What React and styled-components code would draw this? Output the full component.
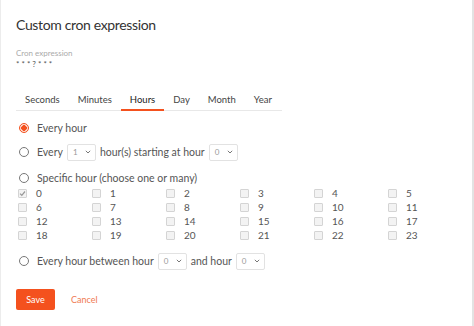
import React from 'react'
import styled, { createGlobalStyle } from 'styled-components'

const Global = createGlobalStyle`
  html, body { margin: 0; padding: 0; background: #fff; }
  body { font-family: "Lato", "Liberation Sans", sans-serif; color: #444; }
`

const Dialog = styled.div`
  box-sizing: border-box;
  width: 474px;
  height: 326px;
  border-left: 1px solid #ececec;
  border-right: 2px solid #e3e3e3;
  padding: 15px 16px 0 15px;
  display: flex;
  flex-direction: column;
`

const Title = styled.h2`
  margin: 0;
  font-size: 14px;
  letter-spacing: -0.35px;
  font-weight: 400;
  line-height: 20px;
  color: #333;
`

const Label = styled.div`
  margin-top: 13px;
  font-size: 8px;
  line-height: 10px;
  color: #aaa;
`

const Expr = styled.div`
  margin-top: 1px;
  font-size: 8px;
  line-height: 10px;
  color: #555;
`

const Tabs = styled.div`
  margin-top: 21px;
  display: flex;
  width: 266px;
  border-bottom: 1px solid #e8e8e8;
`

const Tab = styled.div`
  padding: 0 9px;
  height: 19px;
  line-height: 19px;
  font-size: 9.5px;
  color: ${p => (p.$active ? '#222' : '#444')};
  border-bottom: 2px solid ${p => (p.$active ? '#f4511e' : 'transparent')};
  margin-bottom: -1px;
`

const Options = styled.div`
  margin-top: 5px;
  display: flex;
  flex-direction: column;
`

const Row = styled.div`
  display: flex;
  align-items: center;
  gap: 4px;
  height: ${p => p.$h || 24}px;
  margin-top: ${p => p.$mt || 0}px;
  font-size: 10.5px;
  color: #555;
`

const Radio = styled.span`
  box-sizing: border-box;
  width: 10px;
  height: 10px;
  margin: 0 4px 0 3px;
  border-radius: 50%;
  border: 1px solid ${p => (p.$checked ? '#f4511e' : '#777')};
  background: ${p => (p.$checked ? 'radial-gradient(circle, #f4511e 0 2.6px, #fde0d6 3px)' : '#fff')};
  flex-shrink: 0;
`

const Select = styled.span`
  box-sizing: border-box;
  display: inline-flex;
  align-items: center;
  justify-content: space-between;
  width: 29px;
  height: 17px;
  padding: 0 4px 0 5px;
  border: 1px solid #e2e2e2;
  border-radius: 2px;
  font-size: 8px;
  color: #999;
`

const Grid = styled.div`
  display: grid;
  grid-template-columns: repeat(6, 74px);
  margin: 0 0 7px 2px;
`

const Cell = styled.label`
  display: flex;
  align-items: center;
  height: 14px;
  font-size: 10px;
  color: #555;
`

const Box = styled.span`
  box-sizing: border-box;
  width: 9px;
  height: 9px;
  margin-right: 9px;
  border: 1px solid #d4d4d4;
  border-radius: 1px;
  background: #f3f3f3;
  display: flex;
  align-items: center;
  justify-content: center;
`

const Actions = styled.div`
  margin-top: 16px;
  display: flex;
  align-items: center;
  gap: 16px;
`

const SaveButton = styled.button`
  width: 39px;
  height: 21px;
  border: none;
  border-radius: 2px;
  background: #f4511e;
  color: #fff;
  font-family: inherit;
  font-size: 9px;
  padding: 0;
`

const CancelButton = styled.button`
  border: none;
  background: none;
  color: #f07a52;
  font-family: inherit;
  font-size: 9px;
  padding: 0;
`

const Chevron = () => (
  <svg width="6" height="4" viewBox="0 0 6 4">
    <path d="M0.8 0.8 L3 3 L5.2 0.8" fill="none" stroke="#777" strokeWidth="1" />
  </svg>
)

const Dropdown = ({ value }) => (
  <Select>
    {value}
    <Chevron />
  </Select>
)

const Check = () => (
  <svg width="7" height="7" viewBox="0 0 7 7">
    <path d="M1 3.6 L2.8 5.3 L6 1.5" fill="none" stroke="#999" strokeWidth="1.2" />
  </svg>
)

const tabs = ['Seconds', 'Minutes', 'Hours', 'Day', 'Month', 'Year']
const hours = Array.from({ length: 24 }, (_, i) => i)

const App = () => {
  return (
    <Dialog>
      <Global />
      <Title>Custom cron expression</Title>
      <Label>Cron expression</Label>
      <Expr>* * * ? * * *</Expr>
      <Tabs>
        {tabs.map(t => (
          <Tab key={t} $active={t === 'Hours'}>{t}</Tab>
        ))}
      </Tabs>
      <Options>
        <Row>
          <Radio $checked />
          Every hour
        </Row>
        <Row>
          <Radio />
          Every <Dropdown value="1" /> hour(s) starting at hour <Dropdown value="0" />
        </Row>
        <Row $h={16} $mt={6}>
          <Radio />
          Specific hour (choose one or many)
        </Row>
        <Grid>
          {hours.map(h => (
            <Cell key={h}>
              <Box>{h === 0 && <Check />}</Box>
              {h}
            </Cell>
          ))}
        </Grid>
        <Row>
          <Radio />
          Every hour between hour <Dropdown value="0" /> and hour <Dropdown value="0" />
        </Row>
      </Options>
      <Actions>
        <SaveButton>Save</SaveButton>
        <CancelButton>Cancel</CancelButton>
      </Actions>
    </Dialog>
  )
}

export default App
